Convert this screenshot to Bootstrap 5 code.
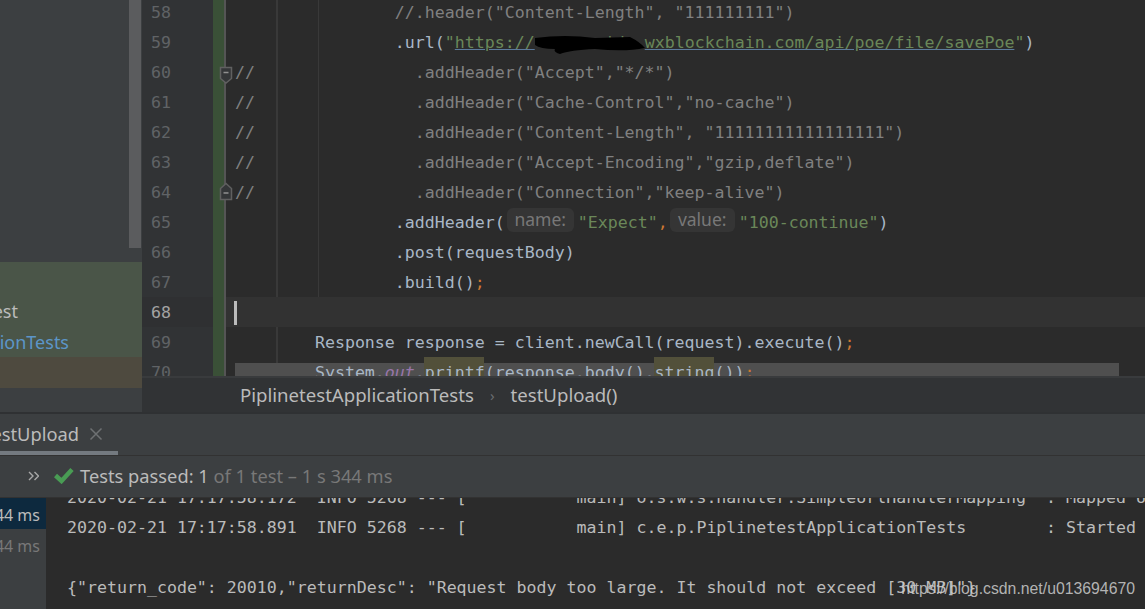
<!DOCTYPE html>
<html lang="en">
<head>
<meta charset="utf-8">
<title>PiplinetestApplicationTests</title>
<link href="https://cdn.jsdelivr.net/npm/bootstrap@5.3.0/dist/css/bootstrap.min.css" rel="stylesheet">
<style>
html,body{height:609px;overflow:hidden;background:#3c3f41}
.ide{width:1145px;height:609px;font-family:"Noto Sans",sans-serif}
.upper{height:412px;flex:none}
.tree{width:142px;background:#3c3f41;position:relative;overflow:hidden;font-size:18px;flex:none}
.thumb{position:absolute;left:129px;top:0;width:12px;height:248px;background:#5b5c5e}
.tree-spacer{height:262px}
.tree-green{height:95px;background:#4a5548;padding-top:34px}
.tree-brown{height:31px;background:#4e4a3f}
.tree-row{height:30.5px;line-height:30px;white-space:nowrap;display:flex;justify-content:flex-end;overflow:hidden;color:#bbb;padding-right:124px}
.tree-row.t2{color:#5c95c8;padding-right:73px}
.main{width:1003px}
.editor{height:376px;overflow:hidden;background:#2b2b2b;flex:none}
.editor-in{margin-top:-3px}
.ln{height:30px;font:16.6px/32px "DejaVu Sans Mono",monospace;white-space:pre;position:relative}
.num{width:71px;background:#313335;color:#606366;padding-left:9px;flex:none}
.chg{width:11px;background:#3a5037;flex:none}
.fold{width:2px;background:#555;flex:none}
.code{flex:1;padding-left:9px;color:#a9b7c6;background:linear-gradient(#393939,#393939) 50px 0/2px 100% no-repeat,linear-gradient(#393939,#393939) 92px 0/1px 100% no-repeat;position:relative}
.code.g1{background:linear-gradient(#393939,#393939) 50px 0/2px 100% no-repeat}
.cur .num{background:#2f3032;color:#a4a3a3}
.cur .code{background:#323232}
.caret{display:inline-block;width:3px;height:24px;background:#bbb;vertical-align:middle;margin-left:-1px;margin-top:-2px}
.s{color:#6a8759}.p{color:#cc7832}.c{color:#808080}
.u{text-decoration:underline;text-decoration-color:#5c7a9c;color:#6a8759}
.i{color:#9876aa;font-style:italic}
.redact{display:inline-block;width:110px;position:relative;height:20px;vertical-align:baseline;line-height:20px}
.redact svg{position:absolute;left:0;top:2px}
.hint{display:inline-block;font:17.500px/23px "Noto Sans",sans-serif;color:#787878;background:#353535;border-radius:6px;height:24px;vertical-align:2px;text-align:center}
.hint-a{width:67px;margin:0 4px 0 2px}
.hint-b{width:65px;margin:0 4px 0 2px}
.sel{position:absolute;left:9px;right:26px;top:6px;height:24px;background:#4f4f4f}
.occ{position:absolute;top:0;height:30px;width:60px;background:#52503a}
.o1{left:198px}.o2{left:428px}
.tx{position:relative}
.foldmark{position:absolute;left:-7px;top:0}
.crumb{height:36px;background:#313335;border-top:2px solid #393b3d;padding-left:98px;font-size:18.6px;color:#bbb;line-height:34px;gap:16px;flex:none}
.chev{color:#6a6d70;font-size:15px}
.sep{height:2px;background:#2f3133;flex:none}
.tabs{height:37px;font-size:18.3px;color:#bbb;flex:none}
.tab{width:118px;height:41px;border-bottom:4px solid #747a80;display:flex;justify-content:flex-end;align-items:center;overflow:hidden;white-space:nowrap;padding:2px 15px 0 0;gap:10px}
.tab svg{flex:none}
.stat{height:43px;margin-top:4px;border-top:1px solid #323232;border-bottom:1px solid #323232;font-size:18.3px;color:#bbb;padding:0 0 2px 28px;flex:none}
.more{margin-right:15px;flex:none}
.tick{margin-right:6px;flex:none}
.dim{color:#787878}
.runs{width:46px;background:#3c3f41;font-size:16px;flex:none;overflow:hidden}
.run{height:31px;line-height:34px;display:flex;justify-content:flex-end;padding-right:6px;white-space:nowrap;color:#bbb}
.run.on{background:#0d293e}
.run.off{color:#787878}
.con{background:#2b2b2b;flex:1;overflow:hidden;padding-left:21px;color:#bbb}
.con-in{margin-top:-16px}
.lower{flex:1;min-height:0;position:relative}
.wmark{position:absolute;right:10px;bottom:9px;font:15.8px/22px "Liberation Sans",sans-serif;color:rgba(205,205,205,.85);margin:0}
</style>
</head>
<body>
<div class="ide d-flex flex-column">
  <div class="upper d-flex">
    <div class="tree">
      <div class="tree-spacer"></div>
      <div class="tree-green">
        <div class="tree-row">piplinetest</div>
        <div class="tree-row t2">PiplinetestApplicationTests</div>
      </div>
      <div class="tree-brown"></div>
      <div class="thumb"></div>
    </div>
    <div class="main d-flex flex-column">
      <div class="editor">
        <div class="editor-in">
          <div class="ln d-flex"><div class="num">58</div><div class="chg"></div><div class="fold"></div><div class="code"><span class="c">                //.header("Content-Length", "111111111")</span></div></div>
          <div class="ln d-flex"><div class="num">59</div><div class="chg"></div><div class="fold"></div><div class="code">                .url(<span class="s">"</span><span class="u">https://<span class="redact"><span class="s">       id</span><svg width="110" height="20" viewBox="0 0 110 20"><path d="M0 3 Q30 -1 60 3 L95 2 Q105 7 110 13 Q90 17 60 14 Q35 15 25 19 Q18 17 20 14 Q5 14 0 10Z" fill="#000"/></svg></span>wxblockchain.com/api/poe/file/savePoe</span><span class="s">"</span>)</div></div>
          <div class="ln d-flex"><div class="num">60</div><div class="chg"></div><div class="fold"></div><div class="code"><svg class="foldmark" width="14" height="30" viewBox="0 0 14 30"><path d="M1.500 10.500H12.500V21.500L7 26L1.500 21.500Z" fill="#343638" stroke="#606060" stroke-width="1.500"/><path d="M4.500 15.500H9.500" stroke="#909090" stroke-width="1.500"/></svg><span class="c">//                .addHeader("Accept","*/*")</span></div></div>
          <div class="ln d-flex"><div class="num">61</div><div class="chg"></div><div class="fold"></div><div class="code"><span class="c">//                .addHeader("Cache-Control","no-cache")</span></div></div>
          <div class="ln d-flex"><div class="num">62</div><div class="chg"></div><div class="fold"></div><div class="code"><span class="c">//                .addHeader("Content-Length", "11111111111111111")</span></div></div>
          <div class="ln d-flex"><div class="num">63</div><div class="chg"></div><div class="fold"></div><div class="code"><span class="c">//                .addHeader("Accept-Encoding","gzip,deflate")</span></div></div>
          <div class="ln d-flex"><div class="num">64</div><div class="chg"></div><div class="fold"></div><div class="code"><svg class="foldmark" width="14" height="30" viewBox="0 0 14 30"><path d="M1.500 22.500H12.500V11.500L7 6.500L1.500 11.500Z" fill="#343638" stroke="#606060" stroke-width="1.500"/><path d="M4.500 16H9.500" stroke="#909090" stroke-width="1.500"/></svg><span class="c">//                .addHeader("Connection","keep-alive")</span></div></div>
          <div class="ln d-flex"><div class="num">65</div><div class="chg"></div><div class="fold"></div><div class="code">                .addHeader(<span class="hint hint-a">name:</span><span class="s">"Expect"</span><span class="p">,</span><span class="hint hint-b">value:</span><span class="s">"100-continue"</span>)</div></div>
          <div class="ln d-flex"><div class="num">66</div><div class="chg"></div><div class="fold"></div><div class="code">                .post(requestBody)</div></div>
          <div class="ln d-flex"><div class="num">67</div><div class="chg"></div><div class="fold"></div><div class="code">                .build()<span class="p">;</span></div></div>
          <div class="ln d-flex cur"><div class="num">68</div><div class="chg"></div><div class="fold"></div><div class="code"><span class="caret"></span></div></div>
          <div class="ln d-flex"><div class="num">69</div><div class="chg"></div><div class="fold"></div><div class="code g1">        Response response = client.newCall(request).execute()<span class="p">;</span></div></div>
          <div class="ln d-flex"><div class="num">70</div><div class="chg"></div><div class="fold"></div><div class="code g1"><div class="sel"></div><div class="occ o1"></div><div class="occ o2"></div><span class="tx">        System.<span class="i">out</span>.printf(response.body().string())<span class="p">;</span></span></div></div>
        </div>
      </div>
      <div class="crumb d-flex align-items-center"><span>PiplinetestApplicationTests</span><span class="chev">›</span><span>testUpload()</span></div>
    </div>
  </div>
  <div class="sep"></div>
  <div class="lower d-flex flex-column">
    <div class="tabs d-flex">
      <div class="tab"><span>testUpload</span><svg width="14" height="14" viewBox="0 0 14 14"><path d="M1.500 1.500L12.500 12.500M12.500 1.500L1.500 12.500" stroke="#6e7173" stroke-width="1.500"/></svg></div>
    </div>
    <div class="stat d-flex align-items-center">
      <svg class="more" width="11" height="10" viewBox="0 0 11 10"><path d="M1 1L5 5L1 9M6.500 1L10.500 5L6.500 9" fill="none" stroke="#a8a8a8" stroke-width="1.400"/></svg>
      <svg class="tick" width="20" height="17" viewBox="0 0 20 17"><path d="M1.500 8.500L7.500 14L18 2.500" fill="none" stroke="#499c54" stroke-width="4.500"/></svg>
      <span>Tests passed: 1 <span class="dim">of 1 test – 1 s 344 ms</span></span>
    </div>
    <div class="d-flex flex-fill" style="min-height:0">
      <div class="runs">
        <div class="run on">1 s 344 ms</div>
        <div class="run off">1 s 344 ms</div>
      </div>
      <div class="con">
        <div class="con-in">
          <div class="ln">2020-02-21 17:17:58.172  INFO 5268 --- [           main] o.s.w.s.handler.SimpleUrlHandlerMapping  : Mapped URL</div>
          <div class="ln">2020-02-21 17:17:58.891  INFO 5268 --- [           main] c.e.p.PiplinetestApplicationTests        : Started</div>
          <div class="ln"> </div>
          <div class="ln">{"return_code": 20010,"returnDesc": "Request body too large. It should not exceed [30 MB]"}</div>
        </div>
      </div>
    </div>
    <p class="wmark">https://blog.csdn.net/u013694670</p>
  </div>
</div>
<script src="https://cdn.jsdelivr.net/npm/bootstrap@5.3.0/dist/js/bootstrap.bundle.min.js"></script>
</body>
</html>
